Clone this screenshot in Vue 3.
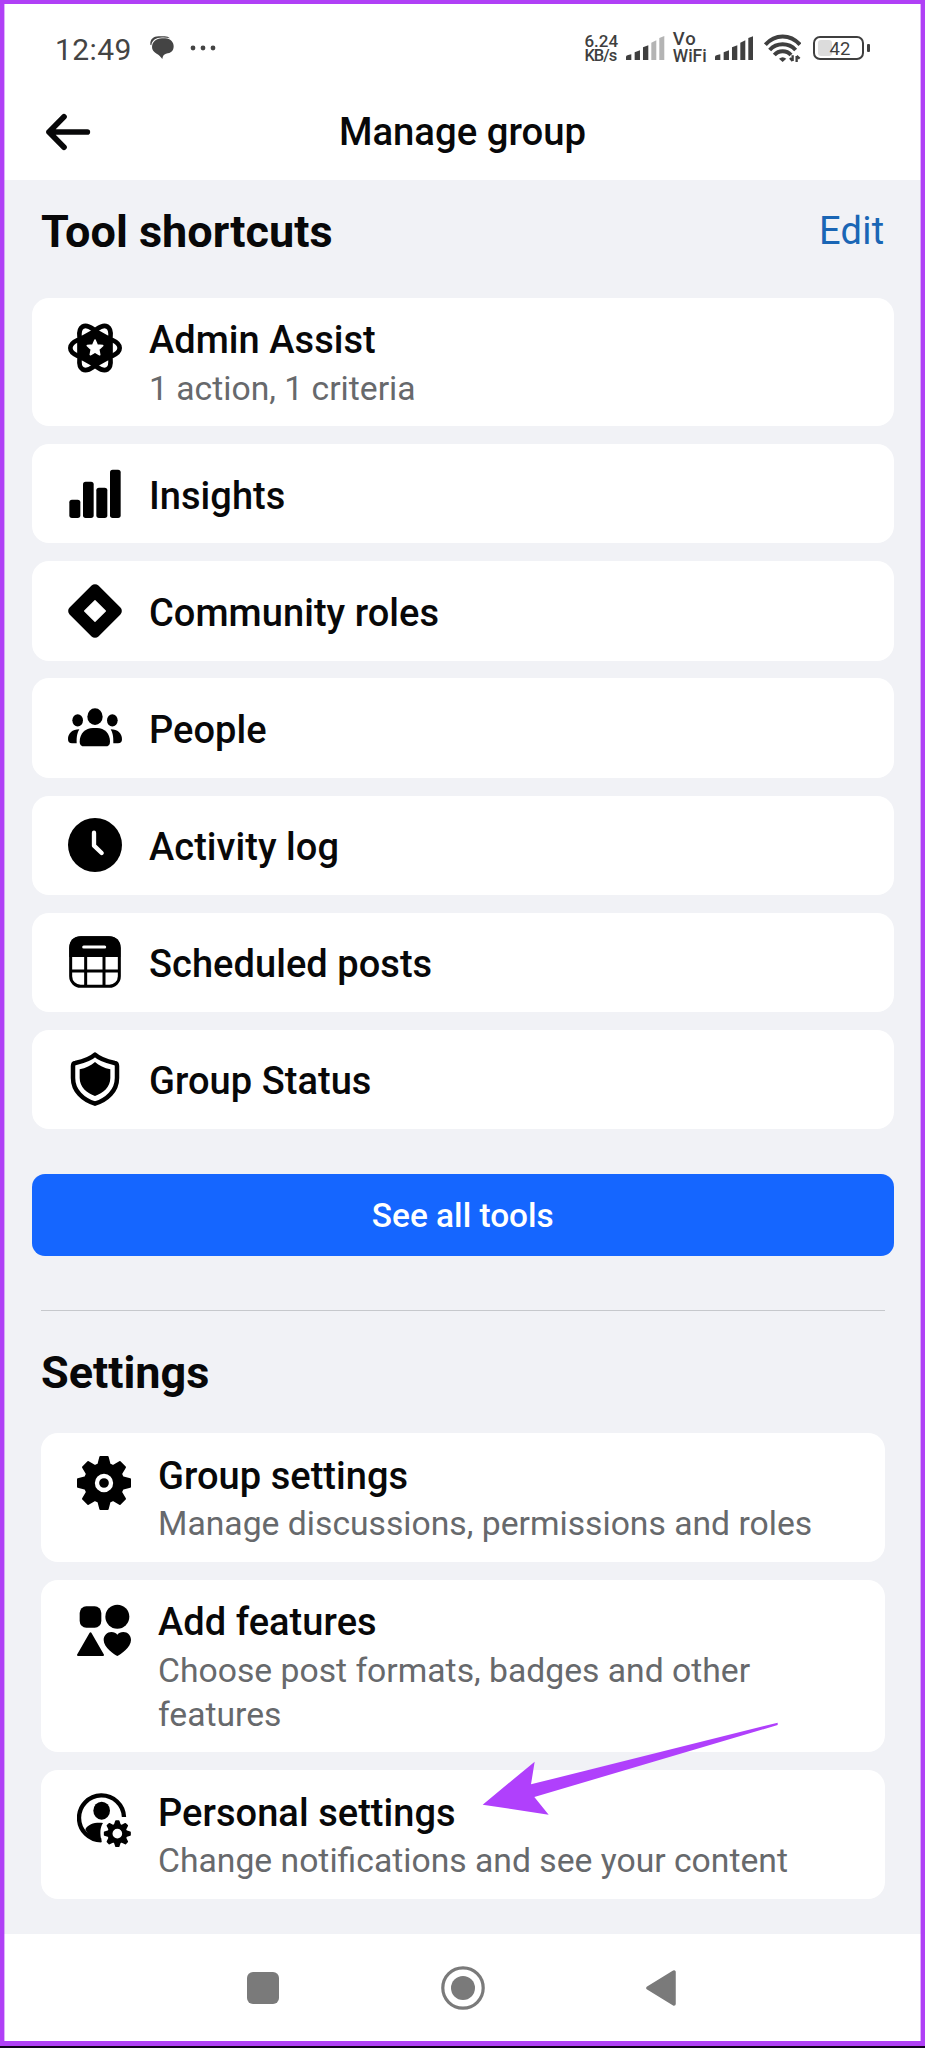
<script setup>
const tools = [
  { icon: 'atom', title: 'Admin Assist', sub: '1 action, 1 criteria' },
  { icon: 'bars', title: 'Insights' },
  { icon: 'diamond', title: 'Community roles' },
  { icon: 'people', title: 'People' },
  { icon: 'clock', title: 'Activity log' },
  { icon: 'calendar', title: 'Scheduled posts' },
  { icon: 'shield', title: 'Group Status' },
]
const settings = [
  { icon: 'gear', title: 'Group settings', sub: 'Manage discussions, permissions and roles' },
  { icon: 'shapes', title: 'Add features', sub: 'Choose post formats, badges and other features' },
  { icon: 'person', title: 'Personal settings', sub: 'Change notifications and see your content' },
]
const groups = { tools, settings }
const teeth = [0, 45, 90, 135, 180, 225, 270, 315]
const signal = [
  'M0 74V62Q1 57 16 55V74Z',
  'M26 74V49L42 43V74Z',
  'M51 74V34L67 28V74Z',
  'M76 74V20L91 13V74Z',
  'M100 74V6L115 0V74Z',
]
</script>

<template>
  <div class="phone">
    <div class="status">
      <span class="time">12:49</span>
      <svg class="msg" width="24" height="24" viewBox="0 0 72 72">
        <path d="M1 26C0 10 10 1 26 1H44Q54 1 60 7Q50 4 36 4.500C17 5 6 13 4 28Z" fill="#444" />
        <path d="M6 33C7 17 18 8 36 7H46C61 8 71 18 71 31C71 44 63 52 48 53Q38 56 37 69C32 62 27 57 20 53C11 48 6 42 6 33Z" fill="#444" />
      </svg>
      <svg class="dots" width="26" height="6" viewBox="0 0 26 6">
        <circle cx="3" cy="3" r="2.4" /><circle cx="13" cy="3" r="2.4" /><circle cx="23" cy="3" r="2.4" />
      </svg>
      <div class="right">
        <div class="net"><span>6.24</span><span class="kb">KB/s</span></div>
        <svg class="sig1" width="38.3" height="24.7" viewBox="0 0 115 74">
          <path v-for="(d, i) in signal" :key="i" :d="d" :fill="i > 2 ? '#b4b4b4' : '#3f3f3f'" />
        </svg>
        <div class="vo"><span class="v">Vo</span><span>WiFi</span></div>
        <svg class="sig2" width="38.3" height="24.7" viewBox="0 0 115 74">
          <path v-for="(d, i) in signal" :key="i" :d="d" fill="#3f3f3f" />
        </svg>
        <svg class="wifi" width="37.3" height="28" viewBox="0 0 112 84">
          <g fill="none" stroke="#3f3f3f" stroke-width="12">
            <path d="M4 32C33 -1 79 -1 108 32" />
            <path d="M17 48C38 25 74 25 95 48" />
            <path d="M31 63C44 48 68 48 81 63" />
          </g>
          <path d="M45 74Q56 65 67 74L56 84Z" fill="#3f3f3f" />
          <path d="M86 64V81M78 72L86 81M98 84V66M98 66L107 74" fill="none" stroke="#3f3f3f" stroke-width="7" />
        </svg>
        <div class="battery"><i class="charge"></i><span>42</span></div>
        <i class="nub"></i>
      </div>
    </div>

    <header class="header">
      <svg width="46" height="38" viewBox="0 0 138 114">
        <path d="M57 11L12 57L57 103M12 57H127" fill="none" stroke="#080809" stroke-width="17" stroke-linecap="round" stroke-linejoin="round" />
      </svg>
      <h1>Manage group</h1>
    </header>

    <main class="main">
      <div class="head"><h2>Tool shortcuts</h2><a class="edit">Edit</a></div>
      <template v-for="(items, name) in groups" :key="name">
        <template v-if="name === 'settings'">
          <button class="all">See all tools</button>
          <hr />
          <h2 class="settings-title">Settings</h2>
        </template>
        <div class="cards" :class="name">
          <div v-for="c in items" :key="c.title" class="card" :class="{ single: !c.sub }">
            <svg class="icon" width="54" height="54" viewBox="0 0 162 162">
              <template v-if="c.icon === 'atom'">
                <g fill="none" stroke="#000" stroke-width="14">
                  <ellipse v-for="a in [0, 60, 120]" :key="a" cx="81" cy="81" rx="74" ry="33" :transform="`rotate(${a} 81 81)`" />
                </g>
                <path d="M81 25L132 53V109L81 137L30 109V53Z" stroke="#000" stroke-width="5" stroke-linejoin="round" />
                <path d="M81 57L87.500 72L104 74L92 85L95 101L81 93L67 101L70 85L58 74L74.500 72Z" fill="#fff" stroke="#fff" stroke-width="5" stroke-linejoin="round" />
              </template>
              <template v-else-if="c.icon === 'bars'">
                <rect x="4" y="98" width="33" height="55" rx="8" />
                <rect x="45" y="44" width="32" height="109" rx="8" />
                <rect x="85" y="62" width="33" height="91" rx="8" />
                <rect x="126" y="8" width="32" height="145" rx="8" />
              </template>
              <template v-else-if="c.icon === 'diamond'">
                <path d="M81 15L147 81L81 147L15 81Z" stroke="#000" stroke-width="29" stroke-linejoin="round" />
                <path d="M81 50L112 81L81 112L50 81Z" fill="#fff" stroke="#fff" stroke-width="4" stroke-linejoin="round" />
              </template>
              <template v-else-if="c.icon === 'people'">
                <ellipse cx="81" cy="47" rx="23" ry="25" />
                <ellipse cx="29" cy="58" rx="16" ry="18.500" />
                <ellipse cx="133" cy="58" rx="16" ry="18.500" />
                <path d="M35 122C35 98 52 81 75 81H87C110 81 126 98 126 122Q126 136 112 136H49Q35 136 35 122Z" />
                <path d="M0 115C0 97 13 85 34 85C29 94 25 104 26 127H12Q0 127 0 115Z" />
                <path d="M162 115C162 97 149 85 128 85C133 94 137 104 136 127H150Q162 127 162 115Z" />
              </template>
              <template v-else-if="c.icon === 'clock'">
                <circle cx="81" cy="81" r="81" />
                <path d="M78 44V83L101 105" fill="none" stroke="#fff" stroke-width="13" stroke-linecap="round" stroke-linejoin="round" />
              </template>
              <template v-else-if="c.icon === 'calendar'">
                <rect x="8" y="8" width="146" height="146" rx="30" fill="none" stroke="#000" stroke-width="9" />
                <path d="M4 66V40Q4 4 40 4H121Q157 4 157 40V66Z" />
                <path d="M53 62V154M108 62V154M6 108H156" stroke="#000" stroke-width="9" />
                <path d="M47 36H110" stroke="#fff" stroke-width="9" stroke-linecap="round" />
              </template>
              <template v-else-if="c.icon === 'shield'">
                <path d="M81 8C68 20 45 28 22 33Q15 34 15 42V78C15 117 45 144 81 155C117 144 147 117 147 78V42Q147 34 140 33C117 28 94 20 81 8Z" fill="none" stroke="#000" stroke-width="13.500" stroke-linejoin="round" />
                <path d="M81 30C69 41 53 48 35 52V78C35 106 57 124 81 132C105 124 127 106 127 78V52C109 48 93 41 81 30Z" />
              </template>
              <template v-else-if="c.icon === 'gear'">
                <circle cx="81" cy="81" r="61" />
                <path v-for="a in teeth" :key="a" d="M70 3H92L98 26L108 36H54L64 26Z" stroke="#000" stroke-width="6" stroke-linejoin="round" :transform="`rotate(${a} 81 81)`" />
                <circle cx="81" cy="81" r="21" fill="none" stroke="#fff" stroke-width="13" />
              </template>
              <template v-else-if="c.icon === 'shapes'">
                <rect x="8" y="10" width="65" height="64" rx="20" />
                <circle cx="121" cy="41" r="36" />
                <path d="M40.500 91L3 156H78Z" stroke="#000" stroke-width="6" stroke-linejoin="round" />
                <path d="M121 159C112 155 80 134 80 111C80 97 91 87 103 87C111 87 117 90 121 95C125 90 131 87 139 87C152 87 162 97 162 111C162 134 130 155 121 159Z" />
              </template>
              <template v-else>
                <path d="M73 142A67.500 67.500 0 1 1 141 72" fill="none" stroke="#000" stroke-width="13" />
                <ellipse cx="74" cy="53" rx="25" ry="27" />
                <path d="M25 109C35 93 52 88 78 90C69 104 68 120 74 147C52 146 38 134 25 109Z" />
                <circle cx="121" cy="122" r="22" fill="none" stroke="#000" stroke-width="15" />
                <path v-for="a in teeth" :key="a" d="M117 84H125L129 96H113Z" stroke="#000" stroke-width="5" stroke-linejoin="round" :transform="`rotate(${a} 121 122)`" />
              </template>
            </svg>
            <div class="text">
              <div class="title">{{ c.title }}</div>
              <div v-if="c.sub" class="sub">{{ c.sub }}</div>
            </div>
          </div>
        </div>
      </template>
    </main>

    <nav class="nav">
      <svg width="32" height="32" viewBox="0 0 32 32"><rect width="32" height="32" rx="6" /></svg>
      <svg class="home" width="44" height="44" viewBox="0 0 44 44">
        <circle cx="22" cy="22" r="20.200" fill="none" stroke="#7a7a7a" stroke-width="3.200" /><circle cx="22" cy="22" r="12" />
      </svg>
      <svg width="30" height="38" viewBox="0 0 30 38"><path d="M2 19L28 3V35Z" stroke="#7a7a7a" stroke-width="3.500" stroke-linejoin="round" /></svg>
    </nav>

    <svg class="pointer" width="297" height="94" viewBox="0 0 891 282">
      <path d="M2 248L158 119L147 187L887 2L887 9L157 225L200 278Z" fill="#b040fc" />
    </svg>
  </div>
</template>

<style>
body { background: #12001f; }
</style>

<style scoped>
.phone {
  position: relative;
  box-sizing: border-box;
  width: 925px;
  height: 2046px;
  border: 4px solid #b040f6;
  border-bottom-width: 5px;
  background: #fff;
  font-family: Roboto, sans-serif;
  color: #080809;
  overflow: hidden;
}
.phone::after {
  content: ''; position: absolute; inset: 0; pointer-events: none;
  border: solid rgba(176, 64, 246, 0.4); border-width: 0 1px;
}
svg { display: block; flex: none; }
h1, h2 { margin: 0; }
.status { height: 88px; display: flex; align-items: center; color: #444; }
.time { width: 77px; margin: 3px 0 0 51px; font-size: 30px; letter-spacing: 0.4px; line-height: 36px; }
.msg { margin-left: 18px; }
.dots { margin-left: 16px; fill: #444; }
.right { display: flex; align-items: center; margin-left: auto; padding-right: 51px; font-weight: 500; font-size: 17px; color: #3f3f3f; }
.net { width: 42px; line-height: 14.700px; display: flex; flex-direction: column; margin-top: 2px; }
.kb { letter-spacing: -1px; font-size: 16.500px; }
.vo { width: 42px; margin-left: 8px; display: flex; flex-direction: column; line-height: 17px; font-size: 17.500px; }
.v { font-size: 18.500px; letter-spacing: 1px; }
.wifi { margin-left: 10.700px; }
.battery {
  box-sizing: border-box; width: 51px; height: 24px; margin-left: 12px;
  border: 2px solid #3f3f3f; border-radius: 7px; display: flex; align-items: center;
  padding-left: 3px; font-weight: 400; font-size: 18.500px; line-height: 20px;
}
.charge { width: 14px; height: 16px; background: #dcdcdc; border-radius: 3px; }
.battery span { margin-left: -2.500px; margin-top: 2px; }
.nub { width: 3px; height: 8px; margin-left: 3px; background: #3f3f3f; border-radius: 1px; }
.header {
  height: 88px; box-sizing: border-box; padding: 0 41px 9px; display: grid;
  grid-template-columns: 46px 1fr 46px; align-items: center;
}
.header h1 { text-align: center; font-size: 38.300px; font-weight: 500; line-height: 46px; }
.main { height: 1754.300px; box-sizing: border-box; background: #f1f2f6; padding: 0 27.400px 0 28px; display: flow-root; }
.head { height: 103px; display: flex; align-items: center; justify-content: space-between; padding: 0 9px; }
h2 { font-size: 45px; font-weight: 700; line-height: 60px; }
.edit { color: #1a66b5; font-size: 38px; line-height: 44px; letter-spacing: 0.300px; margin-bottom: 1px; }
.cards { display: flex; flex-direction: column; gap: 17.950px; }
.tools { margin-top: 14.700px; }
.settings { margin: 0 9px; }
.card {
  box-sizing: border-box; min-height: 128.600px; border-radius: 17px; background: #fff;
  display: flex; align-items: flex-start; gap: 27px; padding: 20.600px 36px 14px;
}
.icon { margin-top: 2.300px; }
.title { font-size: 38px; font-weight: 500; line-height: 44px; letter-spacing: 0.050px; }
.sub { font-size: 33.700px; line-height: 44.800px; margin-top: 4.400px; color: #67696c; }
.single { min-height: 0; height: 99.200px; align-items: center; padding-top: 0; padding-bottom: 0; }
.single .icon { margin-top: 0; }
.single .title { margin-top: 4px; }
.all {
  display: block; width: 100%; height: 81.700px; margin: 44.800px 0 0; border: 0; border-radius: 13px;
  background: #1566ff; color: #fff; font: 500 33.400px/40px Roboto, sans-serif; padding: 2px 0 0;
}
hr { height: 1px; border: 0; background: #c6c8cc; margin: 54.300px 9px 0; }
.settings-title { margin: 32.500px 9px 29.800px; }
.nav { height: 106.700px; display: flex; align-items: center; padding-left: 243px; fill: #7a7a7a; }
.home { margin: 0 160.700px 0 162px; }
.pointer { position: absolute; left: 477.500px; top: 1717.500px; }
</style>
